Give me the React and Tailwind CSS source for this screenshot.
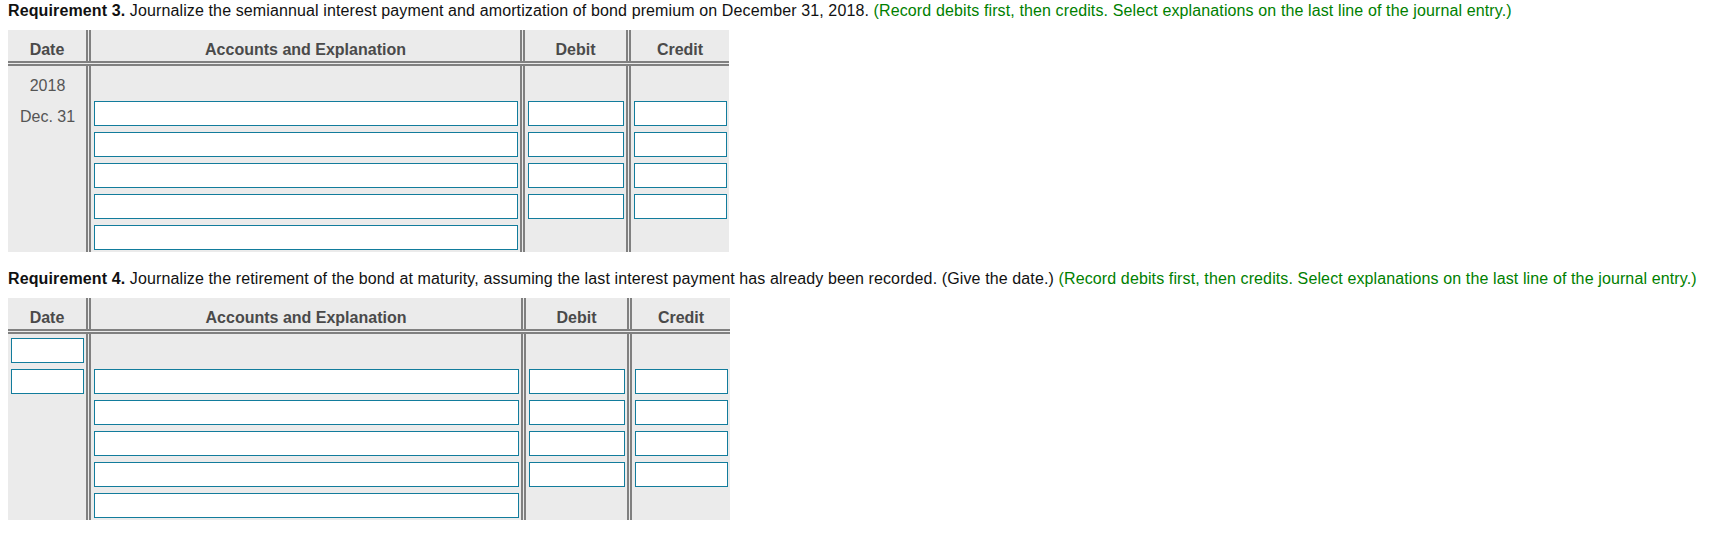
import React from "react";

const SEP = "border-r-[5px] border-double border-r-[#808080]";

function Inp() {
  return (
    <input
      type="text"
      className="block h-[25px] w-full border border-[#127c9c] bg-white outline-none"
    />
  );
}

function Cell({ w, last, children, text }) {
  return (
    <div
      className={
        "h-[31px] shrink-0 pl-[3px] pr-[2px] " +
        (text ? "pt-[11px] " : "pt-[4px] ") +
        (last ? "" : SEP)
      }
      style={{ width: w }}
    >
      {children}
    </div>
  );
}

function Journal({ widths, rows }) {
  const [wd, wa, wb, wc] = widths;
  return (
    <div className="flex flex-col bg-[#ebebeb]" style={{ width: wd + wa + wb + wc + 15 }}>
      <div className="flex border-b-[5px] border-double border-b-[#808080] text-[16px] leading-[18px] font-bold text-[#4a4a4a]">
        <div className={"h-[31px] shrink-0 pt-[11px] text-center " + SEP} style={{ width: wd + 5 }}>Date</div>
        <div className={"h-[31px] shrink-0 pt-[11px] text-center " + SEP} style={{ width: wa + 5 }}>Accounts and Explanation</div>
        <div className={"h-[31px] shrink-0 pt-[11px] text-center " + SEP} style={{ width: wb + 5 }}>Debit</div>
        <div className="h-[31px] shrink-0 pt-[11px] text-center" style={{ width: wc }}>Credit</div>
      </div>
      {rows.map((r, i) => (
        <div key={i} className="flex">
          <Cell w={wd + 5} text={typeof r.date === "string"}>
            {r.date === true ? (
              <Inp />
            ) : r.date ? (
              <div className="text-center text-[16px] leading-[18px] text-[#555555]">{r.date}</div>
            ) : null}
          </Cell>
          <Cell w={wa + 5}>{r.acc ? <Inp /> : null}</Cell>
          <Cell w={wb + 5}>{r.dc ? <Inp /> : null}</Cell>
          <Cell w={wc} last>{r.dc ? <Inp /> : null}</Cell>
        </div>
      ))}
    </div>
  );
}

export default function App() {
  const rows1 = [
    { date: "2018" },
    { date: "Dec. 31", acc: true, dc: true },
    { acc: true, dc: true },
    { acc: true, dc: true },
    { acc: true, dc: true },
    { acc: true },
  ];
  const rows2 = [
    { date: true },
    { date: true, acc: true, dc: true },
    { acc: true, dc: true },
    { acc: true, dc: true },
    { acc: true, dc: true },
    { acc: true },
  ];
  return (
    <div className="min-h-[533px] bg-white pl-[8px] font-['Liberation_Sans',Arial,sans-serif] text-[16px] leading-[18px] text-[#111111]">
      <p className="whitespace-nowrap pt-[2px] tracking-[0.12px]">
        <span className="font-bold">Requirement 3.</span> Journalize the semiannual interest payment and amortization of bond premium on December 31, 2018.{" "}
        <span className="text-[#008000]">(Record debits first, then credits. Select explanations on the last line of the journal entry.)</span>
      </p>
      <div className="mt-[10px]">
        <Journal widths={[78, 429, 101, 98]} rows={rows1} />
      </div>
      <p className="mt-[18px] whitespace-nowrap tracking-[0.12px]">
        <span className="font-bold">Requirement 4.</span> Journalize the retirement of the bond at maturity, assuming the last interest payment has already been recorded. (Give the date.){" "}
        <span className="text-[#008000]">(Record debits first, then credits. Select explanations on the last line of the journal entry.)</span>
      </p>
      <div className="mt-[10px]">
        <Journal widths={[78, 430, 101, 98]} rows={rows2} />
      </div>
    </div>
  );
}
